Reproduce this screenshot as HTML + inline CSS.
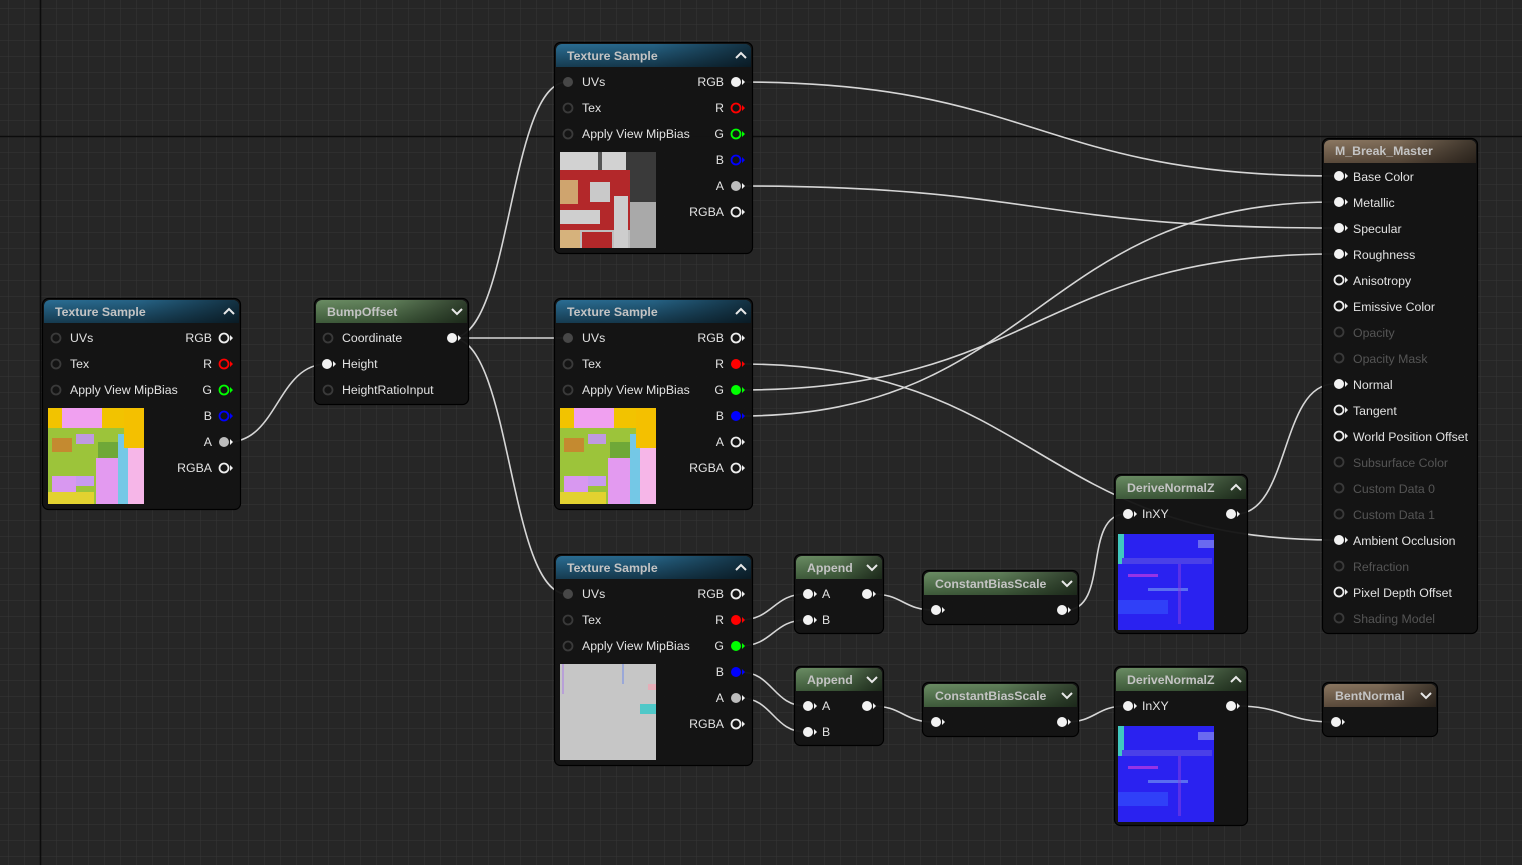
<!DOCTYPE html>
<html><head><meta charset="utf-8"><style>
html,body{margin:0;padding:0;background:#262626;overflow:hidden}
svg{display:block}
text{font-family:"Liberation Sans",sans-serif;font-size:12.3px;fill:#e2e2e2}
.h{font-weight:bold;fill:#c4c4c4;font-size:12.3px}
.d{fill:#555}
.w{fill:none;stroke:#d6d6d6;stroke-width:1.6}
.nb{fill:#141414;fill-opacity:.96;stroke:#000;stroke-width:1.2}
</style></head><body>
<svg width="1522" height="865" viewBox="0 0 1522 865" xmlns="http://www.w3.org/2000/svg">
<defs>
<pattern id="grid" x="8" y="8" width="16" height="16" patternUnits="userSpaceOnUse">
<path d="M0 0H16M0 0V16" stroke="#343434" stroke-width="1.2"/>
</pattern>
<linearGradient id="gb" x1="0" y1="0" x2="0" y2="1"><stop offset="0" stop-color="#2a6d93"/><stop offset="1" stop-color="#163b50"/></linearGradient>
<linearGradient id="gbh" x1="0" y1="0" x2="1" y2="0"><stop offset="0" stop-color="#000" stop-opacity="0"/><stop offset="0.5" stop-color="#000" stop-opacity="0.1"/><stop offset="1" stop-color="#000" stop-opacity="0.55"/></linearGradient>
<linearGradient id="gg" x1="0" y1="0" x2="0" y2="1"><stop offset="0" stop-color="#6a8c63"/><stop offset="1" stop-color="#3e5a3a"/></linearGradient>
<linearGradient id="gr" x1="0" y1="0" x2="0" y2="1"><stop offset="0" stop-color="#8b7761"/><stop offset="1" stop-color="#5a4a3b"/></linearGradient>
<g id="thC">
<rect width="96" height="96" fill="#e9b200"/>
<rect x="0" y="0" width="96" height="22" fill="#f2c300"/>
<rect x="14" y="0" width="40" height="22" fill="#f0a0f0"/>
<rect x="0" y="20" width="80" height="76" fill="#9cc43a"/>
<rect x="4" y="30" width="20" height="14" fill="#c48a30"/>
<rect x="28" y="26" width="18" height="10" fill="#c09ae0"/>
<rect x="50" y="34" width="22" height="50" fill="#6fa838"/>
<rect x="48" y="50" width="30" height="46" fill="#e39af0"/>
<rect x="4" y="68" width="24" height="16" fill="#d898f0"/>
<rect x="28" y="68" width="18" height="10" fill="#c89af0"/>
<rect x="0" y="84" width="46" height="12" fill="#e2d230"/>
<rect x="70" y="26" width="12" height="70" fill="#74c8e6"/>
<rect x="80" y="40" width="16" height="56" fill="#f6b6e8"/>
<rect x="76" y="0" width="20" height="40" fill="#f4c000"/>
</g>
<g id="thT">
<rect width="96" height="96" fill="#bfbfbf"/>
<rect x="0" y="0" width="96" height="18" fill="#d2d2d2"/>
<rect x="66" y="0" width="30" height="50" fill="#3a3a3a"/>
<rect x="0" y="18" width="70" height="60" fill="#b3282a"/>
<rect x="0" y="28" width="18" height="24" fill="#cfa46e"/>
<rect x="30" y="30" width="20" height="20" fill="#c9c9c9"/>
<rect x="0" y="58" width="40" height="14" fill="#cfcfcf"/>
<rect x="54" y="44" width="14" height="52" fill="#cdcdcd"/>
<rect x="70" y="50" width="26" height="46" fill="#a9a9a9"/>
<rect x="0" y="78" width="20" height="18" fill="#d6b27c"/>
<rect x="22" y="80" width="30" height="16" fill="#b3282a"/>
<rect x="38" y="0" width="4" height="18" fill="#555"/>
</g>
<g id="thN">
<rect width="96" height="96" fill="#c6c6c6"/>
<rect x="80" y="40" width="16" height="10" fill="#4fc8c8"/>
<rect x="88" y="20" width="8" height="6" fill="#e6aeb8"/>
<rect x="2" y="0" width="2" height="30" fill="#b8a0d8"/>
<rect x="62" y="0" width="2" height="20" fill="#9aa8d8"/>
</g>
<g id="thB">
<rect width="96" height="96" fill="#2a22f0"/>
<rect x="0" y="0" width="6" height="30" fill="#40c8c0"/>
<rect x="4" y="24" width="90" height="6" fill="#4a40e8"/>
<rect x="10" y="40" width="30" height="3" fill="#e040e0" opacity=".6"/>
<rect x="30" y="54" width="40" height="3" fill="#5a6ef0"/>
<rect x="0" y="66" width="50" height="14" fill="#3040f8"/>
<rect x="60" y="30" width="3" height="60" fill="#8a40e0" opacity=".5"/>
<rect x="80" y="6" width="16" height="8" fill="#6a6af0"/>
</g>
</defs>
<rect width="1522" height="865" fill="#262626"/>
<rect width="1522" height="865" fill="url(#grid)"/>
<path d="M0 136.5H1522M40.5 0V865" stroke="#0c0c0c" stroke-width="1.6"/>

<g class="w">
<path d="M228 442C278 442 277 364 327 364"/>
<path d="M452 338C512 338 508 82 567 82"/>
<path d="M452 338H567"/>
<path d="M452 338C512 338 508 594 567 594"/>
<path d="M740 82C1037 82 1037 176 1334 176"/>
<path d="M740 186C1037 186 1037 228 1334 228"/>
<path d="M740 364C1037 364 1037 540 1334 540"/>
<path d="M740 390C1037 390 1037 254 1334 254"/>
<path d="M740 416C1037 416 1037 202 1334 202"/>
<path d="M740 620C773 620 773 594 806 594"/>
<path d="M740 646C773 646 773 620 806 620"/>
<path d="M740 672C773 672 773 706 806 706"/>
<path d="M740 698C773 698 773 732 806 732"/>
<path d="M872 594C903 594 903 610 934 610"/>
<path d="M872 706C903 706 903 722 934 722"/>
<path d="M1066 610C1110 610 1082 514 1126 514"/>
<path d="M1066 722C1096 722 1096 706 1126 706"/>
<path d="M1236 514C1290 514 1280 384 1334 384"/>
<path d="M1236 706C1285 706 1285 722 1334 722"/>
</g>

<g>
<rect class="nb" x="554.5" y="42.5" width="198" height="211" rx="6"/>
<path d="M556 50a6 6 0 0 1 6-6h183a6 6 0 0 1 6 6v17H556z" fill="url(#gb)"/><path d="M556 50a6 6 0 0 1 6-6h183a6 6 0 0 1 6 6v17H556z" fill="url(#gbh)"/>
<rect class="nb" x="42.5" y="298.5" width="198" height="211" rx="6"/>
<path d="M44 306a6 6 0 0 1 6-6h183a6 6 0 0 1 6 6v17H44z" fill="url(#gb)"/><path d="M44 306a6 6 0 0 1 6-6h183a6 6 0 0 1 6 6v17H44z" fill="url(#gbh)"/>
<rect class="nb" x="314.5" y="298.5" width="154" height="106" rx="6"/>
<path d="M316 306a6 6 0 0 1 6-6h139a6 6 0 0 1 6 6v17H316z" fill="url(#gg)"/><path d="M316 306a6 6 0 0 1 6-6h139a6 6 0 0 1 6 6v17H316z" fill="url(#gbh)"/>
<rect class="nb" x="554.5" y="298.5" width="198" height="211" rx="6"/>
<path d="M556 306a6 6 0 0 1 6-6h183a6 6 0 0 1 6 6v17H556z" fill="url(#gb)"/><path d="M556 306a6 6 0 0 1 6-6h183a6 6 0 0 1 6 6v17H556z" fill="url(#gbh)"/>
<rect class="nb" x="554.5" y="554.5" width="198" height="211" rx="6"/>
<path d="M556 562a6 6 0 0 1 6-6h183a6 6 0 0 1 6 6v17H556z" fill="url(#gb)"/><path d="M556 562a6 6 0 0 1 6-6h183a6 6 0 0 1 6 6v17H556z" fill="url(#gbh)"/>
<rect class="nb" x="794.5" y="554.5" width="89" height="79" rx="6"/>
<path d="M796 562a6 6 0 0 1 6-6h74a6 6 0 0 1 6 6v17H796z" fill="url(#gg)"/><path d="M796 562a6 6 0 0 1 6-6h74a6 6 0 0 1 6 6v17H796z" fill="url(#gbh)"/>
<rect class="nb" x="794.5" y="666.5" width="89" height="79" rx="6"/>
<path d="M796 674a6 6 0 0 1 6-6h74a6 6 0 0 1 6 6v17H796z" fill="url(#gg)"/><path d="M796 674a6 6 0 0 1 6-6h74a6 6 0 0 1 6 6v17H796z" fill="url(#gbh)"/>
<rect class="nb" x="922.5" y="570.5" width="156" height="54" rx="6"/>
<path d="M924 578a6 6 0 0 1 6-6h141a6 6 0 0 1 6 6v17H924z" fill="url(#gg)"/><path d="M924 578a6 6 0 0 1 6-6h141a6 6 0 0 1 6 6v17H924z" fill="url(#gbh)"/>
<rect class="nb" x="922.5" y="682.5" width="156" height="54" rx="6"/>
<path d="M924 690a6 6 0 0 1 6-6h141a6 6 0 0 1 6 6v17H924z" fill="url(#gg)"/><path d="M924 690a6 6 0 0 1 6-6h141a6 6 0 0 1 6 6v17H924z" fill="url(#gbh)"/>
<rect class="nb" x="1114.5" y="474.5" width="133" height="159" rx="6"/>
<path d="M1116 482a6 6 0 0 1 6-6h118a6 6 0 0 1 6 6v17h-130z" fill="url(#gg)"/><path d="M1116 482a6 6 0 0 1 6-6h118a6 6 0 0 1 6 6v17h-130z" fill="url(#gbh)"/>
<rect class="nb" x="1114.5" y="666.5" width="133" height="159" rx="6"/>
<path d="M1116 674a6 6 0 0 1 6-6h118a6 6 0 0 1 6 6v17h-130z" fill="url(#gg)"/><path d="M1116 674a6 6 0 0 1 6-6h118a6 6 0 0 1 6 6v17h-130z" fill="url(#gbh)"/>
<rect class="nb" x="1322.5" y="138.5" width="155" height="495" rx="6"/>
<path d="M1324 146a6 6 0 0 1 6-6h140a6 6 0 0 1 6 6v17h-152z" fill="url(#gr)"/><path d="M1324 146a6 6 0 0 1 6-6h140a6 6 0 0 1 6 6v17h-152z" fill="url(#gbh)"/>
<rect class="nb" x="1322.5" y="682.5" width="115" height="54" rx="6"/>
<path d="M1324 690a6 6 0 0 1 6-6h100a6 6 0 0 1 6 6v17h-112z" fill="url(#gr)"/><path d="M1324 690a6 6 0 0 1 6-6h100a6 6 0 0 1 6 6v17h-112z" fill="url(#gbh)"/>
</g>

<use href="#thT" x="560" y="152"/>
<use href="#thC" x="48" y="408"/>
<use href="#thC" x="560" y="408"/>
<use href="#thN" x="560" y="664"/>
<use href="#thB" x="1118" y="534"/>
<use href="#thB" x="1118" y="726"/>

<text class="h" x="567" y="60">Texture Sample</text>
<text class="h" x="55" y="316">Texture Sample</text>
<text class="h" x="327" y="316">BumpOffset</text>
<text class="h" x="567" y="316">Texture Sample</text>
<text class="h" x="567" y="572">Texture Sample</text>
<text class="h" x="807" y="572">Append</text>
<text class="h" x="807" y="684">Append</text>
<text class="h" x="935" y="588">ConstantBiasScale</text>
<text class="h" x="935" y="700">ConstantBiasScale</text>
<text class="h" x="1127" y="492">DeriveNormalZ</text>
<text class="h" x="1127" y="684">DeriveNormalZ</text>
<text class="h" x="1335" y="155">M_Break_Master</text>
<text class="h" x="1335" y="700">BentNormal</text>

<g fill="none" stroke="#e8e8e8" stroke-width="2">
<path d="M736 58l5-5 5 5"/><path d="M224 314l5-5 5 5"/><path d="M736 314l5-5 5 5"/><path d="M736 570l5-5 5 5"/>
<path d="M1231 490l5-5 5 5"/><path d="M1231 682l5-5 5 5"/>
<path d="M452 309l5 5 5-5"/><path d="M867 565l5 5 5-5"/><path d="M867 677l5 5 5-5"/>
<path d="M1062 581l5 5 5-5"/><path d="M1062 693l5 5 5-5"/><path d="M1421 693l5 5 5-5"/>
</g>

<g>
<text x="582" y="86">UVs</text><text x="582" y="112">Tex</text><text x="582" y="138">Apply View MipBias</text>
<text x="724" y="86" text-anchor="end">RGB</text><text x="724" y="112" text-anchor="end">R</text><text x="724" y="138" text-anchor="end">G</text><text x="724" y="164" text-anchor="end">B</text><text x="724" y="190" text-anchor="end">A</text><text x="724" y="216" text-anchor="end">RGBA</text>

<text x="70" y="342">UVs</text><text x="70" y="368">Tex</text><text x="70" y="394">Apply View MipBias</text>
<text x="212" y="342" text-anchor="end">RGB</text><text x="212" y="368" text-anchor="end">R</text><text x="212" y="394" text-anchor="end">G</text><text x="212" y="420" text-anchor="end">B</text><text x="212" y="446" text-anchor="end">A</text><text x="212" y="472" text-anchor="end">RGBA</text>

<text x="342" y="342">Coordinate</text><text x="342" y="368">Height</text><text x="342" y="394">HeightRatioInput</text>

<text x="582" y="342">UVs</text><text x="582" y="368">Tex</text><text x="582" y="394">Apply View MipBias</text>
<text x="724" y="342" text-anchor="end">RGB</text><text x="724" y="368" text-anchor="end">R</text><text x="724" y="394" text-anchor="end">G</text><text x="724" y="420" text-anchor="end">B</text><text x="724" y="446" text-anchor="end">A</text><text x="724" y="472" text-anchor="end">RGBA</text>

<text x="582" y="598">UVs</text><text x="582" y="624">Tex</text><text x="582" y="650">Apply View MipBias</text>
<text x="724" y="598" text-anchor="end">RGB</text><text x="724" y="624" text-anchor="end">R</text><text x="724" y="650" text-anchor="end">G</text><text x="724" y="676" text-anchor="end">B</text><text x="724" y="702" text-anchor="end">A</text><text x="724" y="728" text-anchor="end">RGBA</text>

<text x="822" y="598">A</text><text x="822" y="624">B</text>
<text x="822" y="710">A</text><text x="822" y="736">B</text>
<text x="1142" y="518">InXY</text><text x="1142" y="710">InXY</text>

<text x="1353" y="181">Base Color</text><text x="1353" y="207">Metallic</text><text x="1353" y="233">Specular</text><text x="1353" y="259">Roughness</text><text x="1353" y="285">Anisotropy</text><text x="1353" y="311">Emissive Color</text>
<text class="d" x="1353" y="337">Opacity</text><text class="d" x="1353" y="363">Opacity Mask</text>
<text x="1353" y="389">Normal</text><text x="1353" y="415">Tangent</text><text x="1353" y="441">World Position Offset</text>
<text class="d" x="1353" y="467">Subsurface Color</text><text class="d" x="1353" y="493">Custom Data 0</text><text class="d" x="1353" y="519">Custom Data 1</text>
<text x="1353" y="545">Ambient Occlusion</text><text class="d" x="1353" y="571">Refraction</text><text x="1353" y="597">Pixel Depth Offset</text><text class="d" x="1353" y="623">Shading Model</text>
</g>

<g>
<g fill="#f2f2f2">
<circle cx="736" cy="82" r="5"/><path d="M742 79l3 3-3 3z"/>
<circle cx="736" cy="186" r="5" fill="#bdbdbd"/><path d="M742 183l3 3-3 3z"/>
<circle cx="224" cy="442" r="5" fill="#bdbdbd"/><path d="M230 439l3 3-3 3z"/>
<circle cx="452" cy="338" r="5"/><path d="M458 335l3 3-3 3z"/>
<circle cx="327" cy="364" r="5"/><path d="M333 361l3 3-3 3z"/>
<circle cx="736" cy="698" r="5" fill="#bdbdbd"/><path d="M742 695l3 3-3 3z"/>
<circle cx="808" cy="594" r="5"/><path d="M814 591l3 3-3 3z"/>
<circle cx="808" cy="620" r="5"/><path d="M814 617l3 3-3 3z"/>
<circle cx="808" cy="706" r="5"/><path d="M814 703l3 3-3 3z"/>
<circle cx="808" cy="732" r="5"/><path d="M814 729l3 3-3 3z"/>
<circle cx="867" cy="594" r="5"/><path d="M873 591l3 3-3 3z"/>
<circle cx="867" cy="706" r="5"/><path d="M873 703l3 3-3 3z"/>
<circle cx="936" cy="610" r="5"/><path d="M942 607l3 3-3 3z"/>
<circle cx="936" cy="722" r="5"/><path d="M942 719l3 3-3 3z"/>
<circle cx="1062" cy="610" r="5"/><path d="M1068 607l3 3-3 3z"/>
<circle cx="1062" cy="722" r="5"/><path d="M1068 719l3 3-3 3z"/>
<circle cx="1128" cy="514" r="5"/><path d="M1134 511l3 3-3 3z"/>
<circle cx="1128" cy="706" r="5"/><path d="M1134 703l3 3-3 3z"/>
<circle cx="1231" cy="514" r="5"/><path d="M1237 511l3 3-3 3z"/>
<circle cx="1231" cy="706" r="5"/><path d="M1237 703l3 3-3 3z"/>
<circle cx="1336" cy="722" r="5"/><path d="M1342 719l3 3-3 3z"/>
<circle cx="1339" cy="176" r="5"/><path d="M1345 173l3 3-3 3z"/>
<circle cx="1339" cy="202" r="5"/><path d="M1345 199l3 3-3 3z"/>
<circle cx="1339" cy="228" r="5"/><path d="M1345 225l3 3-3 3z"/>
<circle cx="1339" cy="254" r="5"/><path d="M1345 251l3 3-3 3z"/>
<circle cx="1339" cy="384" r="5"/><path d="M1345 381l3 3-3 3z"/>
<circle cx="1339" cy="540" r="5"/><path d="M1345 537l3 3-3 3z"/>
</g>
<circle cx="736" cy="364" r="5" fill="#f00"/><path d="M742 361l3 3-3 3z" fill="#f00"/>
<circle cx="736" cy="390" r="5" fill="#0f0"/><path d="M742 387l3 3-3 3z" fill="#0f0"/>
<circle cx="736" cy="416" r="5" fill="#00f"/><path d="M742 413l3 3-3 3z" fill="#00f"/>
<circle cx="736" cy="620" r="5" fill="#f00"/><path d="M742 617l3 3-3 3z" fill="#f00"/>
<circle cx="736" cy="646" r="5" fill="#0f0"/><path d="M742 643l3 3-3 3z" fill="#0f0"/>
<circle cx="736" cy="672" r="5" fill="#00f"/><path d="M742 669l3 3-3 3z" fill="#00f"/>
<g fill="none" stroke-width="1.8">
<g stroke="#eee"><circle cx="736" cy="212" r="4.5"/><circle cx="224" cy="338" r="4.5"/><circle cx="224" cy="468" r="4.5"/><circle cx="736" cy="338" r="4.5"/><circle cx="736" cy="442" r="4.5"/><circle cx="736" cy="468" r="4.5"/><circle cx="736" cy="594" r="4.5"/><circle cx="736" cy="724" r="4.5"/>
<circle cx="1339" cy="280" r="4.5"/><circle cx="1339" cy="306" r="4.5"/><circle cx="1339" cy="410" r="4.5"/><circle cx="1339" cy="436" r="4.5"/><circle cx="1339" cy="592" r="4.5"/></g>
<g stroke="#f00"><circle cx="736" cy="108" r="4.5"/><circle cx="224" cy="364" r="4.5"/></g>
<g stroke="#0f0"><circle cx="736" cy="134" r="4.5"/><circle cx="224" cy="390" r="4.5"/></g>
<g stroke="#00f"><circle cx="736" cy="160" r="4.5"/><circle cx="224" cy="416" r="4.5"/></g>
<g stroke="#3a3a3a"><circle cx="1339" cy="332" r="4.5"/><circle cx="1339" cy="358" r="4.5"/><circle cx="1339" cy="462" r="4.5"/><circle cx="1339" cy="488" r="4.5"/><circle cx="1339" cy="514" r="4.5"/><circle cx="1339" cy="566" r="4.5"/><circle cx="1339" cy="618" r="4.5"/>
<circle cx="568" cy="108" r="4.5"/><circle cx="568" cy="134" r="4.5"/><circle cx="56" cy="338" r="4.5"/><circle cx="56" cy="364" r="4.5"/><circle cx="56" cy="390" r="4.5"/><circle cx="328" cy="338" r="4.5"/><circle cx="328" cy="390" r="4.5"/><circle cx="568" cy="364" r="4.5"/><circle cx="568" cy="390" r="4.5"/><circle cx="568" cy="620" r="4.5"/><circle cx="568" cy="646" r="4.5"/></g>
</g>
<g fill="#eee">
<path d="M742 209l3 3-3 3zM230 335l3 3-3 3zM230 465l3 3-3 3zM742 335l3 3-3 3zM742 439l3 3-3 3zM742 465l3 3-3 3zM742 591l3 3-3 3zM742 721l3 3-3 3zM1345 277l3 3-3 3zM1345 303l3 3-3 3zM1345 407l3 3-3 3zM1345 433l3 3-3 3zM1345 589l3 3-3 3z"/>
<path fill="#f00" d="M742 105l3 3-3 3zM230 361l3 3-3 3z"/>
<path fill="#0f0" d="M742 131l3 3-3 3zM230 387l3 3-3 3z"/>
<path fill="#00f" d="M742 157l3 3-3 3zM230 413l3 3-3 3z"/>
</g>
<g fill="#474747"><circle cx="568" cy="82" r="5"/><circle cx="568" cy="338" r="5"/><circle cx="568" cy="594" r="5"/></g>
</g>
</svg>
</body></html>
